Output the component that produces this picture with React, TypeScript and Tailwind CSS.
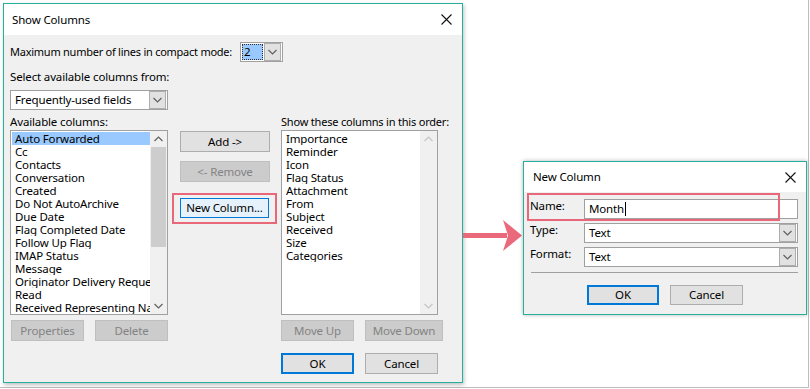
import React from 'react';

const font = { fontFamily: '"Noto Sans", "Segoe UI", Arial, sans-serif', letterSpacing: '-0.15px' };

const Chevron: React.FC<{ up?: boolean; color?: string }> = ({ up, color = '#606060' }) => (
  <svg width="9" height="6" viewBox="0 0 9 6" className="block">
    <polyline
      points={up ? '0.5,5 4.5,1 8.5,5' : '0.5,1 4.5,5 8.5,1'}
      fill="none"
      stroke={color}
      strokeWidth="1.2"
    />
  </svg>
);

const CloseX: React.FC = () => (
  <svg width="11" height="11" viewBox="0 0 11 11" className="block">
    <path d="M0.5 0.5 L10.5 10.5 M10.5 0.5 L0.5 10.5" stroke="#111" strokeWidth="1.1" />
  </svg>
);

const Btn: React.FC<{
  label: string;
  w: string;
  disabled?: boolean;
  variant?: 'default' | 'focus' | 'hover';
  className?: string;
}> = ({ label, w, disabled, variant = 'default', className = '' }) => {
  let cls = 'border border-[#adadad] bg-[#e1e1e1] text-black';
  if (disabled) cls = 'border border-[#bfbfbf] bg-[#cccccc] text-[#838383]';
  if (variant === 'focus') cls = 'border-2 border-[#0078d7] bg-[#e1e1e1] text-black';
  if (variant === 'hover') cls = 'border border-[#0078d7] bg-[#e5f1fb] text-black';
  return (
    <div className={`${w} h-[21px] flex items-center justify-center text-[11.5px] leading-none ${cls} ${className}`}>
      {label}
    </div>
  );
};

const DropBtn: React.FC = () => (
  <div className="w-[17px] h-[18px] border border-[#adadad] bg-[#e1e1e1] flex items-center justify-center">
    <Chevron />
  </div>
);

const available = [
  'Auto Forwarded',
  'Cc',
  'Contacts',
  'Conversation',
  'Created',
  'Do Not AutoArchive',
  'Due Date',
  'Flag Completed Date',
  'Follow Up Flag',
  'IMAP Status',
  'Message',
  'Originator Delivery Request',
  'Read',
  'Received Representing Name',
];

const shown = [
  'Importance',
  'Reminder',
  'Icon',
  'Flag Status',
  'Attachment',
  'From',
  'Subject',
  'Received',
  'Size',
  'Categories',
];

const ListBox: React.FC<{
  items: string[];
  w: string;
  selected?: number;
  disabledScroll?: boolean;
  className?: string;
}> = ({ items, w, selected, disabledScroll, className = '' }) => (
  <div className={`${w} h-[185px] border border-[#a0a0a0] bg-white flex ${className}`}>
    <div className="flex-1 min-w-0 overflow-hidden pl-px pt-px">
      {items.map((it, i) => (
        <div
          key={it}
          className={`h-[13px] leading-[13px] text-[11.5px] pl-[3px] whitespace-nowrap overflow-hidden ${
            i === selected ? 'bg-[#99c9ff]' : ''
          }`}
        >
          {it}
        </div>
      ))}
    </div>
    <div className="w-[17px] bg-[#f0f0f0] flex flex-col items-center">
      <div className="h-[16px] flex items-center justify-center">
        <Chevron up color={disabledScroll ? '#c5c5c5' : '#606060'} />
      </div>
      {disabledScroll ? (
        <div className="flex-1" />
      ) : (
        <div className="flex-1 w-full">
          <div className="mx-px h-[100px] bg-[#cdcdcd]" />
        </div>
      )}
      <div className="h-[16px] flex items-center justify-center">
        <Chevron color={disabledScroll ? '#c5c5c5' : '#606060'} />
      </div>
    </div>
  </div>
);

const ShowColumns: React.FC = () => (
  <div className="absolute left-[3px] top-[3px] w-[460px] h-[380px] border border-[#26b09c] bg-[#f0f0f0] shadow-[1px_2px_4px_rgba(0,0,0,0.25)]">
    <div className="h-[31px] bg-white flex items-center justify-between pl-[8px] pr-[10px]">
      <span className="text-[11.5px]">Show Columns</span>
      <CloseX />
    </div>
    <div className="px-[6px] flex flex-col text-[11.5px]">
      <div className="mt-[7px] h-[20px] flex items-center">
        <span className="w-[230px] whitespace-nowrap text-[11px] tracking-[-0.25px]">
          Maximum number of lines in compact mode:
        </span>
        <div className="w-[43px] h-[20px] border border-[#a0a0a0] bg-white flex items-center pl-px gap-px">
          <div className="w-[21px] h-[16px] bg-[#99c9ff] border border-dotted border-[#333] leading-[14px] pl-px">
            2
          </div>
          <DropBtn />
        </div>
      </div>
      <div className="mt-[8px] h-[14px] leading-[14px]">Select available columns from:</div>
      <div className="mt-[6px] w-[158px] h-[20px] border border-[#a0a0a0] bg-white flex items-center justify-between pl-[4px] pr-px">
        <span>Frequently-used fields</span>
        <DropBtn />
      </div>
      <div className="mt-[5px] h-[14px] leading-[14px] flex whitespace-nowrap">
        <span className="w-[271px] flex-none">Available columns:</span>
        <span className="text-[11px] tracking-[-0.2px]">Show these columns in this order:</span>
      </div>
      <div className="mt-px flex">
        <ListBox items={available} w="w-[158px]" selected={0} />
        <div className="ml-[12px] w-[90px] flex flex-col">
          <Btn label="Add ->" w="w-[90px]" className="mt-px" />
          <Btn label="<- Remove" w="w-[90px]" disabled className="mt-[9px]" />
          <div className="relative mt-[16px] w-[89px]">
            <Btn label="New Column..." w="w-[89px]" variant="hover" className="!h-[20px]" />
            <div className="absolute -left-[8px] -top-[5px] w-[105px] h-[31px] border-2 border-[#e8687a]" />
          </div>
        </div>
        <ListBox items={shown} w="w-[157px]" disabledScroll className="ml-[11px]" />
      </div>
      <div className="mt-[5px] flex">
        <Btn label="Properties" w="w-[73px]" disabled className="ml-px" />
        <Btn label="Delete" w="w-[73px]" disabled className="ml-[11px]" />
        <Btn label="Move Up" w="w-[73px]" disabled className="ml-[113px]" />
        <Btn label="Move Down" w="w-[78px]" disabled className="ml-[11px]" />
      </div>
      <div className="mt-[12px] flex">
        <Btn label="OK" w="w-[73px]" variant="focus" className="ml-[271px]" />
        <Btn label="Cancel" w="w-[73px]" className="ml-[11px]" />
      </div>
    </div>
  </div>
);

const Field: React.FC<{ label: string; value: string; caret?: boolean; select?: boolean; mt: string }> = ({
  label,
  value,
  caret,
  select,
  mt,
}) => (
  <div className={`${mt} flex items-start text-[11.5px]`}>
    <span className="w-[60px] pl-[6px] leading-[14px]">{label}</span>
    <div className="w-[214px] h-[20px] border border-[#a0a0a0] bg-white flex items-center justify-between pl-[4px] pr-px">
      <span className="flex items-center">
        {value}
        {caret && <span className="inline-block w-px h-[14px] bg-black ml-px" />}
      </span>
      {select && <DropBtn />}
    </div>
  </div>
);

const NewColumn: React.FC = () => (
  <div className="absolute left-[523px] top-[161px] w-[284px] h-[154px] border border-[#26b09c] bg-[#f0f0f0] shadow-[0_0_4px_rgba(0,0,0,0.3)]">
    <div className="h-[30px] bg-white flex items-center justify-between pl-[9px] pr-[10px]">
      <span className="text-[11.5px]">New Column</span>
      <CloseX />
    </div>
    <div className="flex flex-col">
      <Field label="Name:" value="Month" caret mt="mt-[7px]" />
      <Field label="Type:" value="Text" select mt="mt-[4px]" />
      <Field label="Format:" value="Text" select mt="mt-[4px]" />
      <div className="mt-[5px] ml-[7px] w-[267px] h-px bg-[#a0a0a0]" />
      <div className="mt-[12px] flex">
        <Btn label="OK" w="w-[72px]" variant="focus" className="ml-[63px] !h-[20px]" />
        <Btn label="Cancel" w="w-[73px]" className="ml-[11px] !h-[20px]" />
      </div>
    </div>
    <div className="absolute left-[3px] top-[31px] w-[253px] h-[28px] border-2 border-[#e8687a]" />
  </div>
);

const Arrow: React.FC = () => (
  <svg className="absolute left-[462px] top-[215px]" width="62" height="40" viewBox="462 215 62 40">
    <rect x="463" y="233" width="44" height="5" fill="#ea6a7c" />
    <polygon points="503,220 522,235.5 503,251 508,235.5" fill="#ea6a7c" />
  </svg>
);

export default function App() {
  return (
    <div className="relative w-[810px] h-[389px] bg-white overflow-hidden text-black" style={font}>
      <div className="absolute left-0 top-0 w-[809px] h-[388px] border-r border-b border-[#bdbdbd]" />
      <ShowColumns />
      <Arrow />
      <NewColumn />
    </div>
  );
}
